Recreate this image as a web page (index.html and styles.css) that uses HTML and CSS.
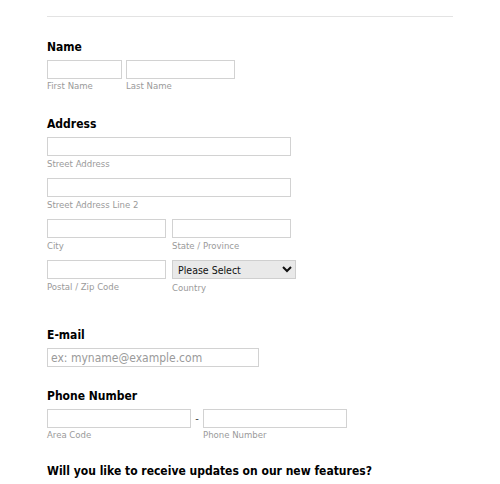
FILE: index.html
```html
<!DOCTYPE html>
<html lang="en">
<head>
<meta charset="utf-8">
<title>Form</title>
<link rel="stylesheet" href="styles.css">
</head>
<body>
<div class="form">
  <div class="divider"></div>

  <div class="field field-name">
    <div class="label">Name</div>
    <div class="row">
      <div class="cell">
        <input class="input w-first" type="text">
        <div class="sub">First Name</div>
      </div>
      <div class="cell">
        <input class="input w-last" type="text">
        <div class="sub">Last Name</div>
      </div>
    </div>
  </div>

  <div class="field field-address">
    <div class="label">Address</div>
    <div class="addr-line">
      <input class="input w-full" type="text">
      <div class="sub sub-addr">Street Address</div>
    </div>
    <div class="addr-line">
      <input class="input w-full" type="text">
      <div class="sub sub-addr">Street Address Line 2</div>
    </div>
    <div class="addr-line row">
      <div class="cell">
        <input class="input w-half" type="text">
        <div class="sub sub-addr">City</div>
      </div>
      <div class="cell">
        <input class="input w-half" type="text">
        <div class="sub sub-addr">State / Province</div>
      </div>
    </div>
    <div class="addr-line row">
      <div class="cell">
        <input class="input w-half" type="text">
        <div class="sub sub-addr">Postal / Zip Code</div>
      </div>
      <div class="cell">
        <select class="select">
          <option>Please Select</option>
        </select>
        <div class="sub sub-country">Country</div>
      </div>
    </div>
  </div>

  <div class="field field-email">
    <div class="label">E-mail</div>
    <input class="input w-email" type="text" placeholder="ex: myname@example.com">
  </div>

  <div class="field field-phone">
    <div class="label">Phone Number</div>
    <div class="row phone-row">
      <div class="cell">
        <input class="input w-phone" type="text">
        <div class="sub">Area Code</div>
      </div>
      <div class="dash">-</div>
      <div class="cell">
        <input class="input w-phone" type="text">
        <div class="sub">Phone Number</div>
      </div>
    </div>
  </div>

  <div class="field field-updates">
    <div class="label">Will you like to receive updates on our new features?</div>
  </div>
</div>
</body>
</html>
```

FILE: styles.css
```css
html, body {
  margin: 0;
  padding: 0;
  background: #ffffff;
}

body {
  font-family: "DejaVu Sans Condensed", "DejaVu Sans", Verdana, sans-serif;
  font-stretch: condensed;
  color: #000;
}

.form {
  width: 406px;
  padding: 16px 0 0 47px;
}

.divider {
  height: 0;
  border-top: 1px solid #e3e3e3;
}

.field {
  display: flex;
  flex-direction: column;
  align-items: flex-start;
}

.field-name { margin-top: 23px; }
.field-address { margin-top: 25px; }
.field-email { margin-top: 26px; }
.field-phone { margin-top: 22px; }
.field-updates { margin-top: 23px; }

.label {
  font-size: 12px;
  line-height: 14px;
  font-weight: bold;
  margin-bottom: 6px;
  white-space: nowrap;
}

.row {
  display: flex;
  gap: 4px;
}

.cell {
  display: flex;
  flex-direction: column;
  align-items: flex-start;
}

.addr-line {
  display: flex;
  flex-direction: column;
  margin-bottom: 8px;
}

.addr-line.row {
  flex-direction: row;
  gap: 6px;
}

.input {
  box-sizing: border-box;
  height: 19px;
  margin: 0;
  padding: 0 3px;
  border: 1px solid #d2d2d2;
  background: #fff;
  font-family: "DejaVu Sans Condensed", "DejaVu Sans", Verdana, sans-serif;
  font-stretch: condensed;
  font-size: 12px;
  color: #333;
  outline: none;
}

.input::placeholder {
  color: #9a9a9a;
}

.w-first { width: 75px; }
.w-last { width: 109px; }
.w-full { width: 244px; }
.w-half { width: 119px; }
.w-email { width: 212px; }
.w-phone { width: 144px; }

.select {
  box-sizing: border-box;
  width: 124px;
  height: 19px;
  margin: 0;
  padding: 0 1px;
  border: 1px solid #cfcfcf;
  background-color: #e9e9e9;
  font-family: "DejaVu Sans Condensed", "DejaVu Sans", Verdana, sans-serif;
  font-stretch: condensed;
  font-size: 10.5px;
  color: #111;
}

.sub {
  font-size: 9.5px;
  line-height: 12px;
  color: #9a9a9a;
  margin-top: 1px;
  white-space: nowrap;
}

.sub-addr { margin-top: 2px; }
.sub-country { margin-top: 3px; }

.phone-row {
  gap: 0;
}

.dash {
  width: 12px;
  text-align: center;
  font-size: 11px;
  line-height: 19px;
  color: #444;
}
```
